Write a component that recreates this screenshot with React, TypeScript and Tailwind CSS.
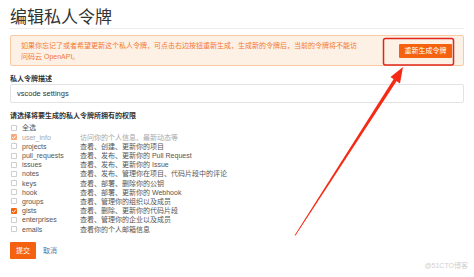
import React from 'react'

const perms = [
  { key: 'user_info', desc: '访问你的个人信息、最新动态等', checked: true, disabled: true },
  { key: 'projects', desc: '查看、创建、更新你的项目' },
  { key: 'pull_requests', desc: '查看、发布、更新你的 Pull Request' },
  { key: 'issues', desc: '查看、发布、更新你的 Issue' },
  { key: 'notes', desc: '查看、发布、管理你在项目、代码片段中的评论' },
  { key: 'keys', desc: '查看、部署、删除你的公钥' },
  { key: 'hook', desc: '查看、部署、更新你的 Webhook' },
  { key: 'groups', desc: '查看、管理你的组织以及成员' },
  { key: 'gists', desc: '查看、删除、更新你的代码片段', checked: true },
  { key: 'enterprises', desc: '查看、管理你的企业以及成员' },
  { key: 'emails', desc: '查看你的个人邮箱信息' },
]

function Box({ checked, disabled }: { checked?: boolean; disabled?: boolean }) {
  if (checked) {
    return (
      <span className={`flex h-[6px] w-[6px] items-center justify-center rounded-[1px] ${disabled ? 'bg-[#f6a878]' : 'bg-[#f5630f]'}`}>
        <svg viewBox="0 0 10 10" className="h-[6px] w-[6px]">
          <path d="M2 5.2 L4.2 7.4 L8.2 2.6" fill="none" stroke="white" strokeWidth="1.6" />
        </svg>
      </span>
    )
  }
  return <span className="h-[6px] w-[6px] rounded-[1px] border border-[#cfcfcf] bg-white shadow-[0_0_1px_rgba(0,0,0,0.15)]" />
}

function Row({ label, desc, checked, disabled }: { label: string; desc?: string; checked?: boolean; disabled?: boolean }) {
  return (
    <div className="flex h-[9.2px] items-center">
      <div className="flex w-[12px] shrink-0 justify-start pl-[1px]">
        <Box checked={checked} disabled={disabled} />
      </div>
      <span className={`w-[58px] shrink-0 ${disabled ? 'text-[#a8a8a8]' : 'text-[#555]'}`}>{label}</span>
      {desc && <span className={disabled ? 'text-[#a8a8a8]' : 'text-[#555]'}>{desc}</span>}
    </div>
  )
}

export default function App() {
  return (
    <div
      className="relative h-[277px] w-[474px] overflow-hidden bg-white px-[10px] text-[7px] leading-[9px] text-[#333]"
      style={{ fontFamily: '"Liberation Sans", "Noto Sans CJK SC", sans-serif' }}
    >
      {/* Title */}
      <div className="pt-[9px]">
        <h1 className="h-[20px] border-b border-[#eee] text-[17px] leading-[18px] text-[#333]">编辑私人令牌</h1>
      </div>

      {/* Alert */}
      <div className="mt-[6px] flex h-[31px] items-center justify-between rounded-[2px] border border-[#f8c9a6] bg-[#fdf0e5] pl-[10px] pr-[11px]">
        <p className="w-[337px] text-[7px] leading-[11px] text-[#f27a35]">
          如果你忘记了或者希望更新这个私人令牌，可点击右边按钮重新生成，生成新的令牌后，当前的令牌将不能访问码云 OpenAPI。
        </p>
        <button type="button" className="h-[14px] w-[53px] rounded-[1px] bg-[#f5620f] text-[7px] text-white">
          重新生成令牌
        </button>
      </div>

      {/* Description */}
      <p className="mt-[8px] h-[10px] font-bold leading-[10px] text-[#333]">私人令牌描述</p>
      <div className="flex h-[19px] items-center rounded-[2px] border border-[#e3e3e3] px-[6px] text-[7.5px] text-[#333]">
        vscode settings
      </div>

      {/* Permissions */}
      <p className="mt-[8px] h-[10px] font-bold leading-[10px] text-[#333]">请选择将要生成的私人令牌所拥有的权限</p>
      <div className="mt-[2.4px]">
        <Row label="全选" />
        {perms.map(p => (
          <Row key={p.key} label={p.key} desc={p.desc} checked={p.checked} disabled={p.disabled} />
        ))}
      </div>

      {/* Actions */}
      <div className="mt-[8px] flex items-center gap-[7px]">
        <button type="button" className="h-[17px] w-[26px] rounded-[1px] bg-[#f5620f] text-[7px] text-white">提交</button>
        <button type="button" className="text-[7px] text-[#4a7aa8]">取消</button>
      </div>

      {/* Annotation */}
      <svg className="pointer-events-none absolute left-0 top-0" width="474" height="277" viewBox="0 0 474 277">
        <rect x="383.5" y="38.5" width="70" height="26.5" rx="2" fill="none" stroke="#e0261c" strokeWidth="1.5" />
        <polygon points="294.5,235.5 295.5,235.5 397,80.5 394,78.5" fill="#f52a14" />
        <polygon points="403,67 390.5,77 400,83.5" fill="#f52a14" />
      </svg>

      <span className="absolute bottom-[7px] right-[6px] text-[7px] text-[#d0d0d0]">@51CTO博客</span>
    </div>
  )
}
